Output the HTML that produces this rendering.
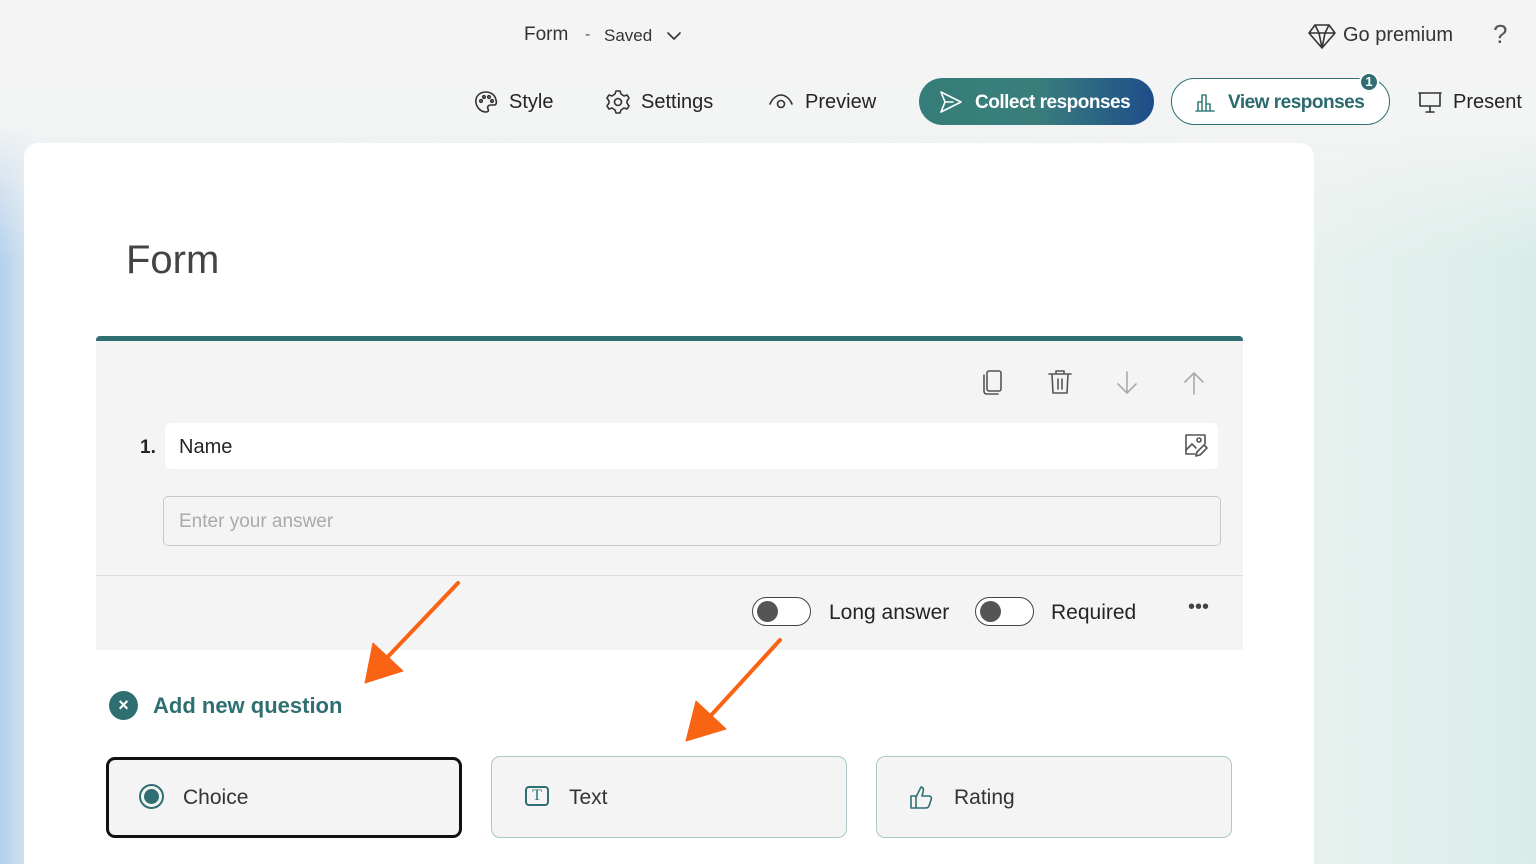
<!DOCTYPE html>
<html style="width:1536px;height:864px;overflow:hidden"><head><meta charset="utf-8"><style>
*{box-sizing:border-box;margin:0;padding:0}
body{width:1536px;height:864px;overflow:hidden;font-family:"Liberation Sans",sans-serif;color:#242424;position:relative;
background:linear-gradient(180deg,#f4f4f4 0px,#f3f4f4 120px,rgba(243,244,244,0) 260px),linear-gradient(90deg,#b3d0ec 0px,#dfeaf0 40px,#e8f1ef 1320px,#d8ede8 1536px);}
.abs{position:absolute}
.t{position:absolute;white-space:nowrap}
svg{position:absolute;fill:none;stroke:#333;stroke-width:1.6;stroke-linecap:round;stroke-linejoin:round}
</style></head><body>
<div class="t" style="left:524px;top:24px;font-size:19px;color:#333">Form</div>
<div class="t" style="left:585px;top:26px;font-size:16px;color:#555">-</div>
<div class="t" style="left:604px;top:26px;font-size:17px;color:#333">Saved</div>
<svg style="left:666px;top:30px" width="16" height="12"><path d="M2 3l6 6 6-6"/></svg>
<svg style="left:1307px;top:22px" width="30" height="28"><path d="M8 3h14l6 8-13 15L2 11zM2 11h26M8 3l4 8 3 15 3-15 4-8M12 11"/></svg>
<div class="t" style="left:1343px;top:24px;font-size:20px;color:#333">Go premium</div>
<div class="t" style="left:1493px;top:19px;font-size:26px;color:#555">?</div>

<svg style="left:473px;top:89px" width="26" height="26"><path d="M13 3C6 3 2 8 3 14c1 5 5 9 10 9 2 0 3-1 2-3-1-2 0-4 3-4h3c2 0 3-2 2-5C22 6 18 3 13 3z"/><circle cx="8" cy="12" r="1.3"/><circle cx="11" cy="8" r="1.3"/><circle cx="16" cy="8" r="1.3"/><circle cx="19" cy="12" r="1.3"/></svg>
<div class="t" style="left:509px;top:91px;font-size:20px">Style</div>
<svg style="left:605px;top:89px" width="26" height="26"><circle cx="13" cy="13" r="3.5"/><path d="M11 2h4l1 3 3 2 3-1 2 3-2 3v2l2 3-2 3-3-1-3 2-1 3h-4l-1-3-3-2-3 1-2-3 2-3v-2L2 9l2-3 3 1 3-2z"/></svg>
<div class="t" style="left:641px;top:91px;font-size:20px">Settings</div>
<svg style="left:768px;top:92px" width="26" height="20"><path d="M2 12C5 5 10 3 13 3s8 2 11 9"/><circle cx="13" cy="12" r="3.5"/></svg>
<div class="t" style="left:805px;top:91px;font-size:20px">Preview</div>
<div class="abs" style="left:919px;top:78px;width:235px;height:47px;border-radius:24px;background:linear-gradient(90deg,#357d7a 0%,#3a7e7c 50%,#1e4d8a 100%)"></div>
<svg style="left:938px;top:89px;stroke:#fff" width="26" height="26"><path d="M3 3l20 10L3 23l4-10zM7 13h8"/></svg>
<div class="t" style="left:975px;top:92px;font-size:19px;color:#fff;font-weight:bold;letter-spacing:-0.5px">Collect responses</div>
<div class="abs" style="left:1171px;top:78px;width:219px;height:47px;border-radius:24px;border:1.5px solid #2f6f72;background:#fff"></div>
<svg style="left:1193px;top:91px;stroke:#3a7e7c" width="24" height="22"><path d="M3 20h18M5 20v-9h4v9M9 20V4h4v16M13 20v-7h4v7"/></svg>
<div class="t" style="left:1228px;top:92px;font-size:19px;color:#2a6a6c;font-weight:bold;letter-spacing:-0.5px">View responses</div>
<div class="abs" style="left:1359px;top:72px;width:20px;height:20px;border-radius:50%;background:#2f6f72;border:2px solid #fff;color:#fff;font-size:13px;font-weight:bold;text-align:center;line-height:16px">1</div>
<svg style="left:1417px;top:90px" width="26" height="26"><path d="M2 3h22M3 3v13h20V3M13 16v5M9 22h8"/></svg>
<div class="t" style="left:1453px;top:91px;font-size:20px">Present</div>

<div class="abs" style="left:24px;top:143px;width:1290px;height:740px;background:#fff;border-radius:14px"></div>
<div class="t" style="left:126px;top:238px;font-size:40px;color:#444">Form</div>
<div class="abs" style="left:96px;top:336px;width:1147px;height:314px;background:#f4f4f4;border-top:5px solid #2f6f72;border-radius:4px 4px 0 0"></div>
<svg style="left:980px;top:369px;stroke:#555" width="26" height="28"><rect x="7" y="2" width="14" height="20" rx="2"/><path d="M4 6v16c0 2 1 3 3 3h11"/></svg>
<svg style="left:1047px;top:369px;stroke:#555" width="26" height="28"><path d="M2 5h22M9 5V2h8v3M5 5l1 19h14l1-19M11 10v10M15 10v10"/></svg>
<svg style="left:1115px;top:370px;stroke:#aaa" width="24" height="26"><path d="M12 2v21M3 14l9 9 9-9"/></svg>
<svg style="left:1182px;top:370px;stroke:#aaa" width="24" height="26"><path d="M12 24V3M3 12l9-9 9 9"/></svg>
<div class="t" style="left:140px;top:437px;font-size:19px;font-weight:bold">1.</div>
<div class="abs" style="left:165px;top:423px;width:1053px;height:46px;background:#fff;border-radius:6px"></div>
<div class="t" style="left:179px;top:436px;font-size:20px">Name</div>
<svg style="left:1182px;top:432px;stroke:#555" width="28" height="28"><path d="M13 22H4V3h19v9"/><circle cx="17" cy="8" r="2"/><path d="M4 18l6-6 4 4M14 24l1-4 7-7 3 3-7 7z"/></svg>
<div class="abs" style="left:163px;top:496px;width:1058px;height:50px;border:1.5px solid #c8c8c8;border-radius:5px;background:#f4f4f4"></div>
<div class="t" style="left:179px;top:511px;font-size:19px;color:#aaa">Enter your answer</div>
<div class="abs" style="left:96px;top:575px;width:1147px;height:1px;background:#ddd"></div>
<div class="abs" style="left:752px;top:597px;width:59px;height:29px;border:1.5px solid #444;border-radius:15px;background:#fff"></div>
<div class="abs" style="left:757px;top:601px;width:21px;height:21px;border-radius:50%;background:#555"></div>
<div class="t" style="left:829px;top:601px;font-size:21px">Long answer</div>
<div class="abs" style="left:975px;top:597px;width:59px;height:29px;border:1.5px solid #444;border-radius:15px;background:#fff"></div>
<div class="abs" style="left:980px;top:601px;width:21px;height:21px;border-radius:50%;background:#555"></div>
<div class="t" style="left:1051px;top:601px;font-size:21px">Required</div>
<div class="t" style="left:1188px;top:596px;font-size:20px;color:#444;letter-spacing:0px">•••</div>

<div class="abs" style="left:109px;top:691px;width:29px;height:29px;border-radius:50%;background:#2f6f72;color:#fff;text-align:center;font-size:18px;line-height:29px;font-weight:bold">×</div>
<div class="t" style="left:153px;top:693px;font-size:22px;font-weight:bold;color:#2f6f72">Add new question</div>

<div class="abs" style="left:106px;top:757px;width:356px;height:81px;border:3px solid #111;border-radius:9px;background:#f4f4f4"></div>
<div class="abs" style="left:139px;top:784px;width:25px;height:25px;border:2px solid #2f6f72;border-radius:50%"></div>
<div class="abs" style="left:144px;top:789px;width:15px;height:15px;background:#2f6f72;border-radius:50%"></div>
<div class="t" style="left:183px;top:786px;font-size:21px;color:#333">Choice</div>
<div class="abs" style="left:491px;top:756px;width:356px;height:82px;border:1.5px solid #a9c8c9;border-radius:9px;background:#f4f4f4"></div>
<div class="abs" style="left:525px;top:786px;width:24px;height:20px;border:2px solid #2f6f72;border-radius:4px;color:#2f6f72;font-family:'Liberation Serif',serif;font-size:16px;text-align:center;line-height:16px">T</div>
<div class="t" style="left:569px;top:786px;font-size:21px;color:#333">Text</div>
<div class="abs" style="left:876px;top:756px;width:356px;height:82px;border:1.5px solid #a9c8c9;border-radius:9px;background:#f4f4f4"></div>
<svg style="left:908px;top:783px;stroke:#2f6f72" width="28" height="28"><path d="M3 13h5v12H3zM8 14l5-10c2 0 3 2 2 5l-1 4h7c2 0 3 2 2 4l-2 6c-1 2-2 2-4 2H8"/></svg>
<div class="t" style="left:954px;top:786px;font-size:21px;color:#333">Rating</div>

<svg style="left:355px;top:575px;stroke:#f96414;stroke-width:4" width="110" height="115"><path d="M103 8L25 90"/><path d="M10 108l8-40 30 28z" fill="#f96414" stroke-width="1"/></svg>
<svg style="left:680px;top:632px;stroke:#f96414;stroke-width:4" width="110" height="115"><path d="M100 8L25 90"/><path d="M6 109l10-40 30 28z" fill="#f96414" stroke-width="1"/></svg>
</body></html>
